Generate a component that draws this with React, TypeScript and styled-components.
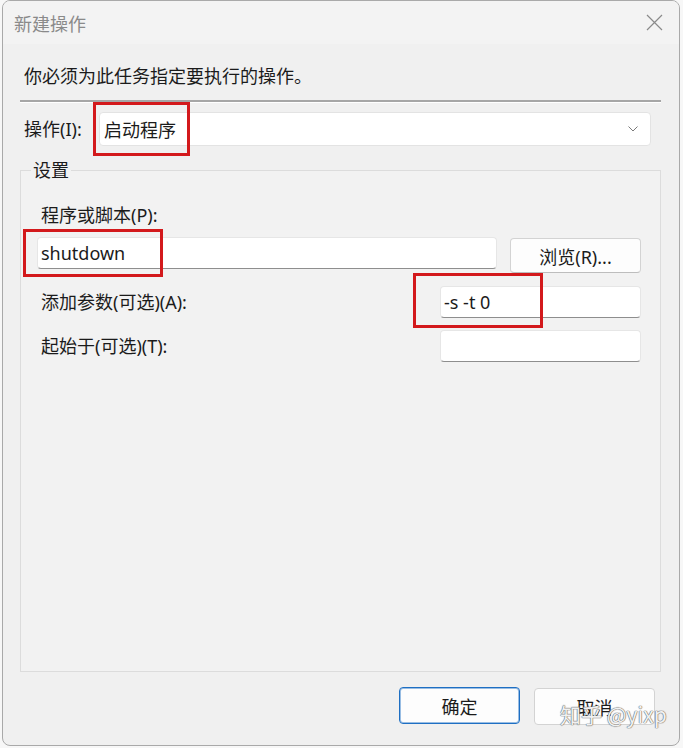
import React from "react";
import styled, { createGlobalStyle } from "styled-components";

const GlobalStyle = createGlobalStyle`
  html, body { margin: 0; padding: 0; background: #f7f7f7; }
  body { font-family: "Noto Sans", "Noto Sans CJK SC", sans-serif; }
  * { box-sizing: border-box; }
`;

const Page = styled.div`
  width: 683px;
  height: 748px;
  padding: 0 3px 2px 2px;
`;

const Window = styled.div`
  height: 746px;
  border: 1px solid #a9a9a9;
  border-radius: 8px;
  overflow: hidden;
  display: flex;
  flex-direction: column;
  background: #f0f0f0;
  color: #1b1b1b;
  font-size: 18px;
  font-family: "Noto Sans", "Noto Sans CJK SC", sans-serif;
`;

const TitleBar = styled.div`
  height: 43px;
  flex: none;
  display: flex;
  align-items: center;
  justify-content: space-between;
  padding: 0 16px 0 11px;
  background: #f3f3f3;
  color: #8a8a8a;
  font-size: 18px;
`;

const CloseIcon = styled.svg`
  width: 17px;
  height: 17px;
  display: block;
`;

const Body = styled.div`
  flex: 1;
  display: flex;
  flex-direction: column;
  padding: 20px 18px 0 17px;
  min-height: 0;
`;

const Intro = styled.div`
  padding-left: 4px;
  line-height: 24px;
`;

const Separator = styled.div`
  margin-top: 12px;
  height: 3px;
  border-top: 2px solid #a6a6a6;
  border-bottom: 1px solid #ffffff;
`;

const ActionRow = styled.div`
  margin-top: 9px;
  display: flex;
  align-items: center;
  padding-left: 4px;
`;

const ActionLabel = styled.span`
  width: 75px;
  flex: none;
  line-height: 24px;
  white-space: nowrap;
`;

const Combo = styled.div`
  position: relative;
  flex: 1;
  height: 34px;
  margin-right: 10px;
  display: flex;
  align-items: center;
  justify-content: space-between;
  padding: 0 12px 0 4px;
  background: #ffffff;
  border: 1px solid #e3e3e3;
  border-radius: 4px;
`;

const Chevron = styled.svg`
  width: 10px;
  height: 6px;
  display: block;
`;

const Group = styled.fieldset`
  flex: 1;
  min-width: 0;
  margin: 12px 0 0 0;
  padding: 21px 19px 0 16px;
  border: 1px solid #dcdcdc;
  background: #f2f2f2;
`;

const Legend = styled.legend`
  margin-left: -6px;
  padding: 0 2px;
  line-height: 24px;
`;

const FieldLabel = styled.div`
  padding-left: 4px;
  line-height: 24px;
  white-space: nowrap;
`;

const ScriptRow = styled.div`
  margin-top: 10px;
  display: flex;
  align-items: flex-start;
  gap: 13px;
`;

const TextBox = styled.div<{ $width?: number }>`
  position: relative;
  height: 32px;
  flex: ${(p) => (p.$width ? "none" : "1")};
  width: ${(p) => (p.$width ? `${p.$width}px` : "auto")};
  display: flex;
  align-items: center;
  padding-left: 3px;
  background: #ffffff;
  border: 1px solid #e6e6e6;
  border-bottom-color: #8e8e8e;
  border-radius: 4px;
`;

const BrowseButton = styled.button`
  width: 131px;
  height: 35px;
  margin-top: 1px;
  flex: none;
  background: #fdfdfd;
  border: 1px solid #d3d3d3;
  border-bottom-color: #bdbdbd;
  border-radius: 4px;
  color: #1b1b1b;
  font: inherit;
  padding: 0;
`;

const ParamRow = styled.div<{ $gap: number }>`
  margin-top: ${(p) => p.$gap}px;
  display: flex;
  align-items: center;
  justify-content: space-between;
`;

const Highlight = styled.div<{ $l: number; $t: number; $w: number; $h: number }>`
  position: absolute;
  left: ${(p) => p.$l}px;
  top: ${(p) => p.$t}px;
  width: ${(p) => p.$w}px;
  height: ${(p) => p.$h}px;
  border: 3px solid #d3191c;
  pointer-events: none;
`;

const Footer = styled.div`
  flex: none;
  display: flex;
  justify-content: flex-end;
  gap: 14px;
  padding: 15px 24px 20px 0;
`;

const DialogButton = styled.button<{ $primary?: boolean }>`
  position: relative;
  width: 121px;
  height: 37px;
  margin-top: ${(p) => (p.$primary ? "0" : "1px")};
  background: #fdfdfd;
  border: 1px solid ${(p) => (p.$primary ? "#1e6fc3" : "#d3d3d3")};
  box-shadow: ${(p) => (p.$primary ? "inset 0 0 0 1px rgba(30,111,195,0.45)" : "none")};
  border-radius: 4px;
  color: #1b1b1b;
  font: inherit;
  padding: 0;
`;

const Watermark = styled.span`
  position: absolute;
  left: 25px;
  top: 12px;
  white-space: nowrap;
  font-family: "Noto Sans CJK SC", sans-serif;
  font-size: 21px;
  line-height: 26px;
  color: rgba(255, 255, 255, 0.92);
  text-shadow: 0 0 1px #6e6e6e, 0 0 1px #6e6e6e, 0 0 1px #6e6e6e;
  pointer-events: none;
`;

export default function App() {
  return (
    <>
      <GlobalStyle />
      <Page>
        <Window>
          <TitleBar>
            <span>新建操作</span>
            <CloseIcon viewBox="0 0 17 17">
              <path d="M1 1 L16 16 M16 1 L1 16" stroke="#8a8a8a" strokeWidth="1.2" fill="none" />
            </CloseIcon>
          </TitleBar>
          <Body>
            <Intro>你必须为此任务指定要执行的操作。</Intro>
            <Separator />
            <ActionRow>
              <ActionLabel>操作(I):</ActionLabel>
              <Combo>
                <span>启动程序</span>
                <Chevron viewBox="0 0 10 6">
                  <path d="M0.5 0.5 L5 5 L9.5 0.5" stroke="#7a7a7a" strokeWidth="1" fill="none" />
                </Chevron>
                <Highlight $l={-7} $t={-11} $w={97} $h={54} />
              </Combo>
            </ActionRow>
            <Group>
              <Legend>设置</Legend>
              <FieldLabel>程序或脚本(P):</FieldLabel>
              <ScriptRow>
                <TextBox>
                  shutdown
                  <Highlight $l={-15} $t={-9} $w={140} $h={48} />
                </TextBox>
                <BrowseButton>浏览(R)...</BrowseButton>
              </ScriptRow>
              <ParamRow $gap={13}>
                <FieldLabel>添加参数(可选)(A):</FieldLabel>
                <TextBox $width={201}>
                  -s -t 0
                  <Highlight $l={-28} $t={-14} $w={130} $h={55} />
                </TextBox>
              </ParamRow>
              <ParamRow $gap={12}>
                <FieldLabel>起始于(可选)(T):</FieldLabel>
                <TextBox $width={201} />
              </ParamRow>
            </Group>
          </Body>
          <Footer>
            <DialogButton $primary>确定</DialogButton>
            <DialogButton>
              取消
              <Watermark>知乎 @yixp</Watermark>
            </DialogButton>
          </Footer>
        </Window>
      </Page>
    </>
  );
}
